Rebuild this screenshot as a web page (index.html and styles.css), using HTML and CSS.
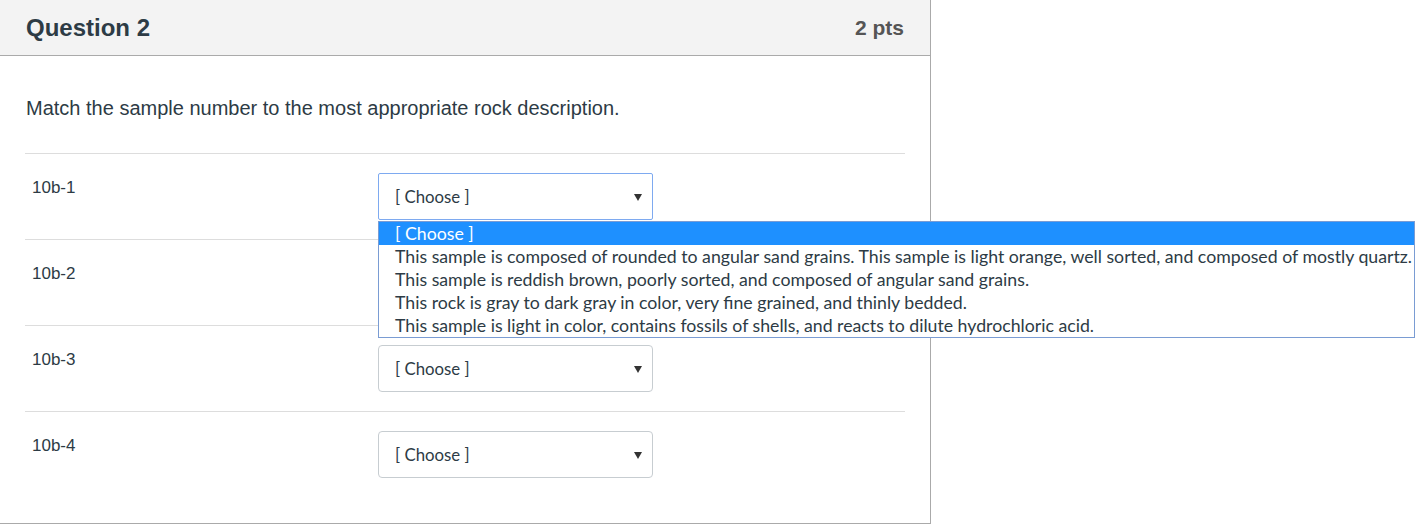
FILE: index.html
```html
<!DOCTYPE html>
<html>
<head>
<meta charset="utf-8">
<link rel="stylesheet" href="styles.css">
</head>
<body>
<div class="card">
  <div class="card-header">
    <span class="title">Question 2</span>
    <span class="pts">2 pts</span>
  </div>
  <div class="card-body">
    <p class="prompt">Match the sample number to the most appropriate rock description.</p>
    <div class="rows">
      <div class="row">
        <div class="label">10b-1</div>
        <div class="select-wrap">
          <div class="select focused"><span>[ Choose ]</span><span class="arrow"></span></div>
          <ul class="dropdown">
            <li class="active">[ Choose ]</li>
            <li>This sample is composed of rounded to angular sand grains. This sample is light orange, well sorted, and composed of mostly quartz.</li>
            <li>This sample is reddish brown, poorly sorted, and composed of angular sand grains.</li>
            <li>This rock is gray to dark gray in color, very fine grained, and thinly bedded.</li>
            <li>This sample is light in color, contains fossils of shells, and reacts to dilute hydrochloric acid.</li>
          </ul>
        </div>
      </div>
      <div class="row">
        <div class="label">10b-2</div>
        <div class="select-wrap">
          <div class="select covered"><span>[ Choose ]</span><span class="arrow"></span></div>
        </div>
      </div>
      <div class="row">
        <div class="label">10b-3</div>
        <div class="select-wrap">
          <div class="select"><span>[ Choose ]</span><span class="arrow"></span></div>
        </div>
      </div>
      <div class="row">
        <div class="label">10b-4</div>
        <div class="select-wrap">
          <div class="select"><span>[ Choose ]</span><span class="arrow"></span></div>
        </div>
      </div>
    </div>
  </div>
</div>
</body>
</html>
```
FILE: styles.css
```css
html, body {
  margin: 0;
  padding: 0;
  background: #fff;
}
body {
  font-family: "Liberation Sans", Arial, sans-serif;
  color: #2d3b45;
}
.card {
  width: 930px;
  border-right: 1px solid #aaaaaa;
  border-bottom: 1px solid #aaaaaa;
}
.card-header {
  height: 55px;
  background: #f3f3f3;
  border-bottom: 1px solid #aaaaaa;
  display: flex;
  align-items: center;
  justify-content: space-between;
  padding: 0 26px 0 26px;
}
.title {
  font-size: 24px;
  font-weight: bold;
  color: #2d3b45;
}
.pts {
  font-size: 21px;
  font-weight: bold;
  color: #555555;
}
.card-body {
  padding: 39px 25px 26px 25px;
}
.prompt {
  margin: 0 0 31px 1px;
  font-size: 20px;
  line-height: 27px;
}
.row {
  border-top: 1px solid #dddddd;
  height: 86px;
  box-sizing: border-box;
  padding-top: 19px;
  display: flex;
  align-items: flex-start;
}
.label {
  width: 346px;
  padding-left: 7px;
  margin-top: 5px;
  font-size: 17px;
  line-height: 20px;
  color: #2d3b45;
}
.select-wrap {
  position: relative;
}
.select {
  width: 275px;
  height: 47px;
  box-sizing: border-box;
  border: 1px solid #c7cdd1;
  border-radius: 4px;
  display: flex;
  align-items: center;
  justify-content: space-between;
  padding: 0 10px 0 16px;
  font-family: Lato, "Liberation Sans", sans-serif;
  font-size: 16.8px;
  color: #2d3b45;
}
.select.focused {
  border-color: #7eaaf0;
  border-radius: 2px;
}
.select.covered {
  visibility: hidden;
}
.arrow {
  width: 0;
  height: 0;
  border-left: 4px solid transparent;
  border-right: 4px solid transparent;
  border-top: 7px solid #333;
  margin-top: 1px;
}
.dropdown {
  position: absolute;
  top: 48px;
  left: 0;
  width: 1037px;
  box-sizing: border-box;
  margin: 0;
  padding: 0;
  list-style: none;
  background: #fff;
  border: 1px solid #7a9cd3;
  font-family: Lato, "Liberation Sans", sans-serif;
  font-size: 17.72px;
  color: #2d3b45;
  z-index: 10;
}
.dropdown li {
  height: 23px;
  line-height: 23px;
  padding-left: 16px;
  white-space: nowrap;
}
.dropdown li.active {
  background: #1e90ff;
  color: #fff;
}
```
